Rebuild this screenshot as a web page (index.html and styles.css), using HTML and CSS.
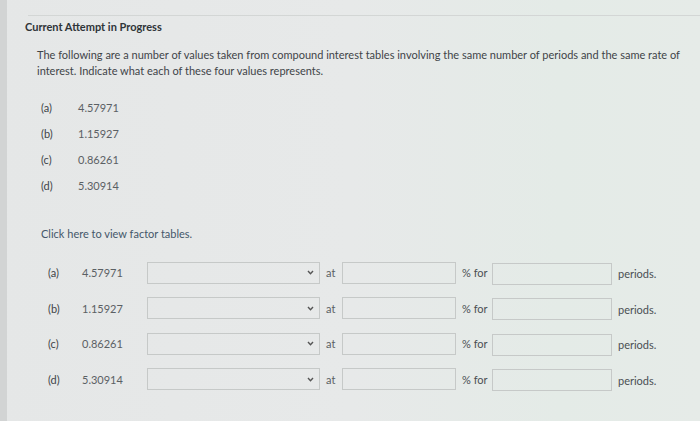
FILE: index.html
```html
<!DOCTYPE html>
<html>
<head>
<meta charset="utf-8">
<link rel="stylesheet" href="styles.css">
</head>
<body>
<div class="page">
  <div class="rule"></div>
  <h1 class="title">Current Attempt in Progress</h1>
  <p class="intro">The following are a number of values taken from compound interest tables involving the same number of periods and the same rate of interest. Indicate what each of these four values represents.</p>
  <div class="values">
    <div class="vrow"><span class="vlab">(a)</span><span class="vnum">4.57971</span></div>
    <div class="vrow"><span class="vlab">(b)</span><span class="vnum">1.15927</span></div>
    <div class="vrow"><span class="vlab">(c)</span><span class="vnum">0.86261</span></div>
    <div class="vrow"><span class="vlab">(d)</span><span class="vnum">5.30914</span></div>
  </div>
  <div class="link">Click here to view factor tables.</div>
  <div class="answers">
    <div class="arow">
      <span class="alab">(a)</span><span class="anum">4.57971</span>
      <div class="select"><svg class="chev" width="7" height="5" viewBox="0 0 7 5"><path d="M1 1 L3.5 3.8 L6 1" fill="none" stroke="#555" stroke-width="1.4"/></svg></div>
      <span class="at">at</span><div class="box rate"></div>
      <span class="pfor">% for</span><div class="box per"></div>
      <span class="periods">periods.</span>
    </div>
    <div class="arow">
      <span class="alab">(b)</span><span class="anum">1.15927</span>
      <div class="select"><svg class="chev" width="7" height="5" viewBox="0 0 7 5"><path d="M1 1 L3.5 3.8 L6 1" fill="none" stroke="#555" stroke-width="1.4"/></svg></div>
      <span class="at">at</span><div class="box rate"></div>
      <span class="pfor">% for</span><div class="box per"></div>
      <span class="periods">periods.</span>
    </div>
    <div class="arow">
      <span class="alab">(c)</span><span class="anum">0.86261</span>
      <div class="select"><svg class="chev" width="7" height="5" viewBox="0 0 7 5"><path d="M1 1 L3.5 3.8 L6 1" fill="none" stroke="#555" stroke-width="1.4"/></svg></div>
      <span class="at">at</span><div class="box rate"></div>
      <span class="pfor">% for</span><div class="box per"></div>
      <span class="periods">periods.</span>
    </div>
    <div class="arow">
      <span class="alab">(d)</span><span class="anum">5.30914</span>
      <div class="select"><svg class="chev" width="7" height="5" viewBox="0 0 7 5"><path d="M1 1 L3.5 3.8 L6 1" fill="none" stroke="#555" stroke-width="1.4"/></svg></div>
      <span class="at">at</span><div class="box rate"></div>
      <span class="pfor">% for</span><div class="box per"></div>
      <span class="periods">periods.</span>
    </div>
  </div>
</div>
</body>
</html>
```
FILE: styles.css
```css
html, body {
  margin: 0;
  padding: 0;
}
body {
  width: 700px;
  height: 421px;
  overflow: hidden;
  background: linear-gradient(90deg, #e5e7e7 0%, #e7e9e9 50%, #e4ebe7 80%, #e6ebe8 100%);
  font-family: Lato, "Open Sans", sans-serif;
  color: #3d4246;
}
.page {
  border-left: 7px solid #d2d4d4;
  height: 421px;
  box-sizing: border-box;
  padding-top: 15px;
}
.rule {
  border-top: 1px solid #d3d6d5;
  margin-left: 21px;
}
.title {
  margin: 4px 0 0 18px;
  font-size: 11px;
  line-height: 14px;
  font-weight: 700;
  color: #2f3438;
}
.intro {
  margin: 13px 20px 0 30px;
  font-size: 11px;
  line-height: 16px;
  color: #3f4448;
}
.values {
  margin: 15px 0 0 34px;
}
.vrow {
  display: flex;
  align-items: center;
  height: 26px;
  font-size: 11px;
}
.vlab {
  width: 37px;
  color: #3f4448;
}
.vnum {
  color: #5b6064;
}
.link {
  margin: 28px 0 0 34px;
  font-size: 11px;
  line-height: 16px;
  color: #44576a;
}
.answers {
  margin: 13px 0 0 41px;
}
.arow {
  display: flex;
  align-items: center;
  height: 35.5px;
  font-size: 11px;
}
.alab {
  width: 34px;
  color: #3f4448;
}
.anum {
  width: 65px;
  color: #5b6064;
}
.select {
  width: 173px;
  height: 22px;
  box-sizing: border-box;
  border: 1px solid #c6c9c8;
  display: flex;
  align-items: center;
  justify-content: flex-end;
  padding-right: 5px;
}
.at {
  width: 22px;
  padding-left: 6px;
  box-sizing: border-box;
  color: #5b6064;
}
.box {
  height: 22px;
  box-sizing: border-box;
  border: 1px solid #c6c9c8;
}
.rate {
  width: 114px;
}
.pfor {
  width: 36px;
  padding-left: 6px;
  box-sizing: border-box;
  color: #4a4f53;
}
.per {
  width: 120px;
  margin-top: 2px;
}
.periods {
  padding-left: 6px;
  margin-top: 2px;
  color: #4a4f53;
}
```
